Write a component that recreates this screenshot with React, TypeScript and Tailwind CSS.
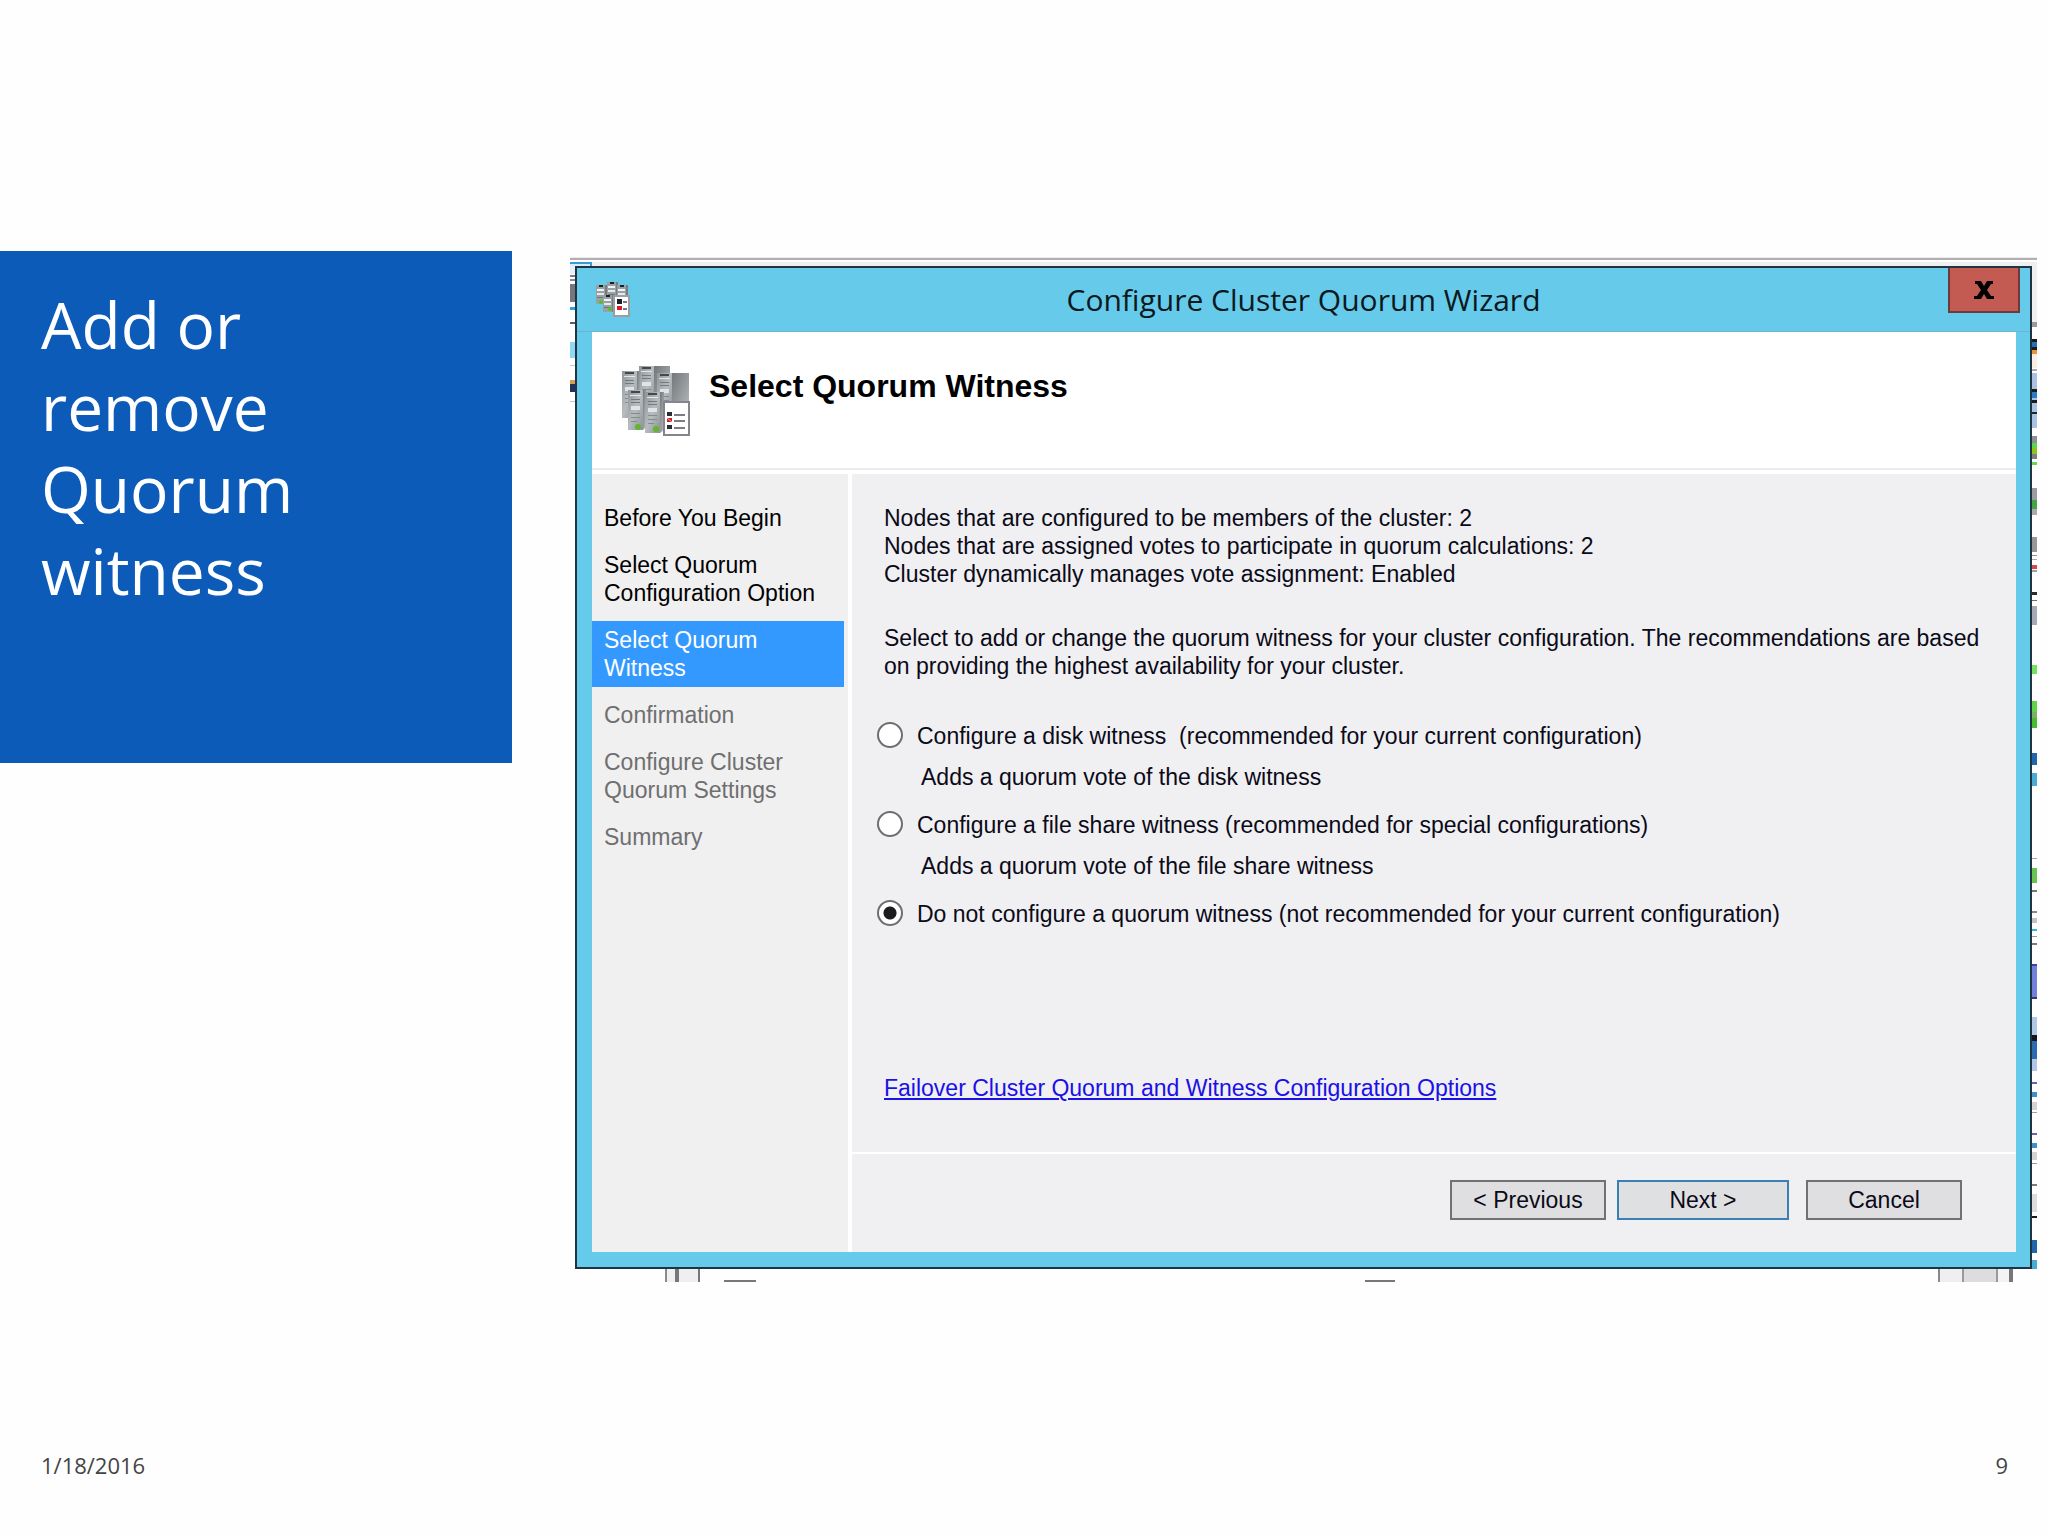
import React, { useState } from 'react';

interface Step {
  label: string[];
  state: 'done' | 'current' | 'pending';
}

interface WitnessOption {
  id: string;
  label: string;
  description?: string;
}

// One sliver of the console window that shows around the dialog: [y, height, color]
type Sliver = [number, number, string];

const steps: Step[] = [
  { label: ['Before You Begin'], state: 'done' },
  { label: ['Select Quorum', 'Configuration Option'], state: 'done' },
  { label: ['Select Quorum', 'Witness'], state: 'current' },
  { label: ['Confirmation'], state: 'pending' },
  { label: ['Configure Cluster', 'Quorum Settings'], state: 'pending' },
  { label: ['Summary'], state: 'pending' },
];

const options: WitnessOption[] = [
  {
    id: 'disk',
    label: 'Configure a disk witness  (recommended for your current configuration)',
    description: 'Adds a quorum vote of the disk witness',
  },
  {
    id: 'share',
    label: 'Configure a file share witness (recommended for special configurations)',
    description: 'Adds a quorum vote of the file share witness',
  },
  {
    id: 'none',
    label: 'Do not configure a quorum witness (not recommended for your current configuration)',
  },
];

const stepColors = {
  done: 'text-black',
  current: 'bg-[#3399ff] text-white',
  pending: 'text-[#6f6f70]',
};

const leftSlivers: Sliver[] = [
  [0, 8, '#e6f1fb'], [9, 2, '#7d7d80'], [13, 2, '#8a8a8d'], [18, 18, '#77777b'],
  [41, 3, '#2f9fd8'], [56, 2, '#5c5c62'], [76, 16, '#8fd8f4'], [99, 1, '#c9c9c9'],
  [114, 4, '#d99a52'], [118, 8, '#22305e'], [135, 1, '#c4c4c4'],
];

const rightSlivers: Sliver[] = [
  [0, 56, '#f0f0f0'], [56, 5, '#9a9a9a'], [73, 3, '#1b1b1b'], [76, 5, '#2a6fb4'], [81, 3, '#1b1b1b'],
  [84, 4, '#e8953a'], [88, 14, '#fbeee2'], [103, 2, '#b5a9a4'], [107, 55, '#a9c2e4'], [123, 3, '#1b1b1b'],
  [126, 6, '#2a7cc4'], [134, 3, '#1b1b1b'], [146, 2, '#22252e'], [170, 7, '#8d9095'], [177, 5, '#5fd648'],
  [182, 6, '#8fc41b'], [188, 5, '#7c8084'], [196, 3, '#62dc4c'], [222, 12, '#9a9ea3'], [234, 9, '#45a544'],
  [243, 6, '#a9abae'], [271, 15, '#98989b'], [289, 1, '#8f8f94'], [293, 1, '#aaaaaa'], [299, 4, '#d5494b'],
  [304, 2, '#a0a0a3'], [326, 3, '#2b2b2e'], [334, 1, '#6f6f74'], [340, 19, '#a7aab4'], [399, 9, '#74e05e'],
  [435, 11, '#5fd648'], [446, 6, '#7fb069'], [452, 10, '#46bf2f'], [487, 12, '#1f66ad'], [507, 13, '#49abd6'],
  [592, 1, '#a5a5a5'], [602, 15, '#68c455'], [624, 2, '#77777a'], [645, 2, '#88888a'], [652, 5, '#c3c3c3'],
  [663, 2, '#2fb7dd'], [670, 1, '#999999'], [677, 2, '#7a7a7d'], [698, 35, '#7380dc'], [698, 2, '#3a45a8'],
  [731, 2, '#30387a'], [751, 54, '#b0c8e6'], [769, 6, '#14161c'], [775, 18, '#2a6bb2'], [816, 2, '#6a62ad'],
  [826, 5, '#3a92cb'], [836, 8, '#d3d3d3'], [846, 1, '#a89c9c'], [867, 2, '#6a62ad'], [877, 5, '#3a92cb'],
  [886, 8, '#d3d3d3'], [897, 1, '#999999'], [918, 2, '#7b7b7e'], [928, 18, '#dcdcdc'], [950, 2, '#1b1b1b'],
  [974, 13, '#1f66ad'], [994, 9, '#49abd6'],
];

const Slivers: React.FC<{ items: Sliver[] }> = ({ items }) => (
  <svg className="w-[5px] h-full shrink-0" viewBox="0 0 5 1003" preserveAspectRatio="none" aria-hidden="true">
    {items.map(([y, height, fill]) => (
      <rect key={`${y}-${fill}`} x="0" y={y} width="5" height={height} fill={fill} />
    ))}
  </svg>
);

// A single tower of the cluster icon
const Tower: React.FC<{ x: number; y: number; h: number; side: number }> = ({ x, y, h, side }) => (
  <g transform={`translate(${x} ${y})`}>
    <path d={`M15 0h${side}v${h - 3}l${-side} 3z`} fill="url(#towerSide)" />
    <rect width="15" height={h} fill="url(#towerFront)" />
    <rect x="3" y="1" width="9" height="2" fill="#45484a" />
    <rect x="2" y="5" width="11" height="1" fill="#e3e7e8" />
    <rect x="3" y="9" width="9" height="1" fill="#73797c" />
    <rect x="3" y="12" width="9" height="1" fill="#73797c" />
    <rect x="3" y="16" width="9" height="4" fill="#dfe4e6" />
    <rect x="3" y="23" width="9" height="1" fill="#858b8e" />
    {h > 30 && <rect x="3" y="27" width="9" height="1" fill="#858b8e" />}
    {h > 36 && <rect x="3" y="31" width="6" height="1" fill="#858b8e" />}
  </g>
);

const ClusterIcon: React.FC = () => (
  <svg className="w-[70px] h-[70px] shrink-0" viewBox="0 0 70 70" aria-hidden="true">
    <defs>
      <linearGradient id="towerFront" x1="0" y1="0" x2="1" y2="1">
        <stop offset="0" stopColor="#8e9699" />
        <stop offset="0.5" stopColor="#b7bdbf" />
        <stop offset="1" stopColor="#8b9295" />
      </linearGradient>
      <linearGradient id="towerSide" x1="0" y1="0" x2="1" y2="1">
        <stop offset="0" stopColor="#72777a" />
        <stop offset="1" stopColor="#b9bdbe" />
      </linearGradient>
    </defs>
    <Tower x={18} y={0} h={44} side={16} />
    <Tower x={1} y={5} h={47} side={3} />
    <Tower x={36} y={7} h={42} side={17} />
    <Tower x={7} y={24} h={40} side={3} />
    <Tower x={24} y={26} h={41} side={4} />
    <circle cx="17" cy="61" r="3" fill="#63b52c" />
    <circle cx="35" cy="63" r="3" fill="#63b52c" />
    <rect x="43" y="36" width="25" height="33" fill="#fff" stroke="#85858b" strokeWidth="2" />
    <rect x="46" y="46" width="5" height="4" fill="#2b2c35" />
    <rect x="46" y="52" width="5" height="4" fill="#c3212b" />
    <path d="M46 52l5 4" stroke="#f2a4a8" />
    <rect x="46" y="59" width="5" height="4" fill="#2b2c35" />
    <path d="M53 49h11M53 55h11M53 62h11" stroke="#7b7b84" strokeWidth="2" />
  </svg>
);

const SmallTower: React.FC<{ x: number; y: number; h: number }> = ({ x, y, h }) => (
  <g transform={`translate(${x} ${y})`}>
    <rect width="11" height={h} fill="#9aa1a4" />
    <rect x="9" width="2" height={h} fill="#777d80" />
    <rect x="3" width="4" height="2" fill="#1d2022" />
    <rect x="1" y="4" width="7" height="2" fill="#f1f4f5" />
    <rect x="1" y="8" width="7" height="2" fill="#e6eaec" />
    <rect x="1" y="12" width="7" height="1" fill="#6f7578" />
  </g>
);

const SmallClusterIcon: React.FC = () => (
  <svg className="w-[34px] h-[35px]" viewBox="0 0 34 35" aria-hidden="true">
    <SmallTower x={11} y={0} h={18} />
    <SmallTower x={0} y={3} h={19} />
    <SmallTower x={21} y={3} h={18} />
    <circle cx="5" cy="20" r="2" fill="#55c02c" />
    <SmallTower x={7} y={13} h={17} />
    <circle cx="14" cy="27" r="2" fill="#55c02c" />
    <rect x="18" y="14" width="15" height="20" fill="#fff" stroke="#9c9ea3" strokeWidth="2" />
    <rect x="21" y="17" width="5" height="5" fill="#1d1d24" />
    <rect x="21" y="24" width="5" height="4" fill="#cf202a" />
    <path d="M27 20h4M27 27h4" stroke="#77777f" strokeWidth="2" />
  </svg>
);

const TitleBar: React.FC = () => (
  <div className="h-16 grid grid-cols-[1fr_auto_1fr] items-center border-b border-[#6fb4cf]">
    <div className="pl-[19px]">
      <SmallClusterIcon />
    </div>
    <h2 className="font-['Open_Sans',sans-serif] text-[30px] leading-10 text-[#0b1820]">
      Configure Cluster Quorum Wizard
    </h2>
    <button
      type="button"
      aria-label="Close"
      className="self-start justify-self-end mr-[10px] w-[72px] h-[45px] flex items-center justify-center bg-[#c45b52] border-2 border-t-0 border-[#6b3a3c]"
    >
      <svg className="w-5 h-[18px]" viewBox="0 0 20 18" aria-hidden="true">
        <path
          d="M1 0h6l3 5 3-5h6v3h-2l-4 6 4 6h3v3h-7l-3-5-3 5H0v-3h3l4-6-4-6H1z"
          fill="#000"
        />
      </svg>
    </button>
  </div>
);

const StepList: React.FC = () => (
  <nav className="w-64 shrink-0 pt-[25px] bg-[#f0f0f1]">
    <ol className="flex flex-col gap-[9px]">
      {steps.map((step) => (
        <li key={step.label.join(' ')} className={`mr-1 pl-3 py-[5px] ${stepColors[step.state]}`}>
          {step.label.map((line) => (
            <span key={line} className="block">{line}</span>
          ))}
        </li>
      ))}
    </ol>
  </nav>
);

const WizardDialog: React.FC = () => {
  const [selected, setSelected] = useState('none');

  return (
    <section className="flex-1 flex flex-col border-2 border-[#1f3340] bg-[#66cbea] font-['Liberation_Sans',Arial,sans-serif] text-[23px] leading-7 text-[#0a0a18]">
      <TitleBar />
      <div className="flex-1 flex flex-col ml-[15px] mr-[14px] mb-[15px] bg-white">
        <header className="h-[138px] flex items-start gap-[18px] pl-[29px] pt-[34px] border-b-2 border-[#ededef]">
          <ClusterIcon />
          <h3 className="text-[32px] leading-10 font-bold text-black">Select Quorum Witness</h3>
        </header>

        <div className="flex-1 flex gap-1 mt-1">
          <StepList />

          <div className="flex-1 flex flex-col gap-[2px]">
            <div className="flex-1 flex flex-col pl-8 pt-[30px] pb-[50px] bg-[#f0eff1]">
              <p>
                Nodes that are configured to be members of the cluster: 2<br />
                Nodes that are assigned votes to participate in quorum calculations: 2<br />
                Cluster dynamically manages vote assignment: Enabled
              </p>
              <p className="mt-9">
                Select to add or change the quorum witness for your cluster configuration. The recommendations are based<br />
                on providing the highest availability for your cluster.
              </p>

              <div className="mt-[42px] -ml-[7px] flex flex-col gap-5">
                {options.map((option) => (
                  <div key={option.id}>
                    <div className="flex items-start gap-[14px]">
                      <input
                        type="radio"
                        id={option.id}
                        name="witness"
                        checked={selected === option.id}
                        onChange={() => setSelected(option.id)}
                        className="appearance-none w-[26px] h-[26px] shrink-0 rounded-full border-2 border-[#6e6e70] bg-white checked:bg-[radial-gradient(circle,#1c1c1e_6px,#fff_7px)]"
                      />
                      <label htmlFor={option.id} className="whitespace-pre">{option.label}</label>
                    </div>
                    {option.description && <p className="mt-[13px] ml-11">{option.description}</p>}
                  </div>
                ))}
              </div>

              <a href="#options" className="mt-auto self-start text-[#1a10e8] underline decoration-2 underline-offset-2">
                Failover Cluster Quorum and Witness Configuration Options
              </a>
            </div>

            <div className="flex justify-end pt-[26px] pb-8 pr-[54px] bg-[#f0eff1]">
              <button type="button" className="w-[156px] h-10 border-2 border-[#717173] bg-[#dfdee0]">&lt; Previous</button>
              <button type="button" className="ml-[11px] w-[172px] h-10 border-2 border-[#3a80b4] bg-[#dfe0e1]">Next &gt;</button>
              <button type="button" className="ml-[17px] w-[156px] h-10 border-2 border-[#717173] bg-[#dfdee0]">Cancel</button>
            </div>
          </div>
        </div>
      </div>
    </section>
  );
};

export default function App() {
  return (
    <div className="min-h-screen flex flex-col bg-[#fefefe]">
      <div className="flex items-start pt-[251px]">
        <aside className="w-1/4 aspect-square bg-[#0c5bb9] pl-[41px] pt-[33px]">
          <h1 className="font-['Open_Sans',sans-serif] text-[64px] leading-[82px] text-white">
            Add or<br />remove<br />Quorum<br />witness
          </h1>
        </aside>

        <main className="flex-1 ml-[58px] mr-[11px] mt-[6px] flex flex-col">
          <div className="h-[9px] flex flex-col justify-between border-t border-[#ececec]">
            <div className="h-[2px] bg-[#b3aeb1]" />
            <div className="h-1 bg-[#efefef]">
              <div className="w-[22px] h-1 border-t-2 border-r-2 border-[#3a9ad8] bg-[#d8ecfa]" />
            </div>
          </div>

          <div className="flex h-[1003px]">
            <Slivers items={leftSlivers} />
            <WizardDialog />
            <Slivers items={rightSlivers} />
          </div>

          {/* bottom edge of the console window behind the dialog */}
          <div className="h-[13px] flex justify-between">
            <div className="flex items-end ml-[95px]">
              <div className="w-[10px] h-full border-l-2 border-[#8a8a8c] bg-[#f0f0f1]" />
              <div className="w-[25px] h-full border-l-4 border-r-2 border-[#77777a] bg-[#efeff1]" />
              <div className="ml-6 w-8 h-[2px] bg-[#77777c]" />
              <div className="ml-[609px] w-[30px] h-[2px] bg-[#77777c]" />
            </div>
            <div className="flex mr-6">
              <div className="w-6 border-l-2 border-[#8a8a8c] bg-[#efeff1]" />
              <div className="w-9 border-x-2 border-[#9a9a9c] bg-[#dddcde]" />
              <div className="w-[15px] border-r-4 border-[#77777a] bg-[#f3f3f4]" />
            </div>
          </div>
        </main>
      </div>

      <footer className="mt-auto flex justify-between pl-[41px] pr-10 pb-[55px] font-['Open_Sans',sans-serif] text-[22px] leading-8 text-[#444]">
        <span>1/18/2016</span>
        <span>9</span>
      </footer>
    </div>
  );
}
